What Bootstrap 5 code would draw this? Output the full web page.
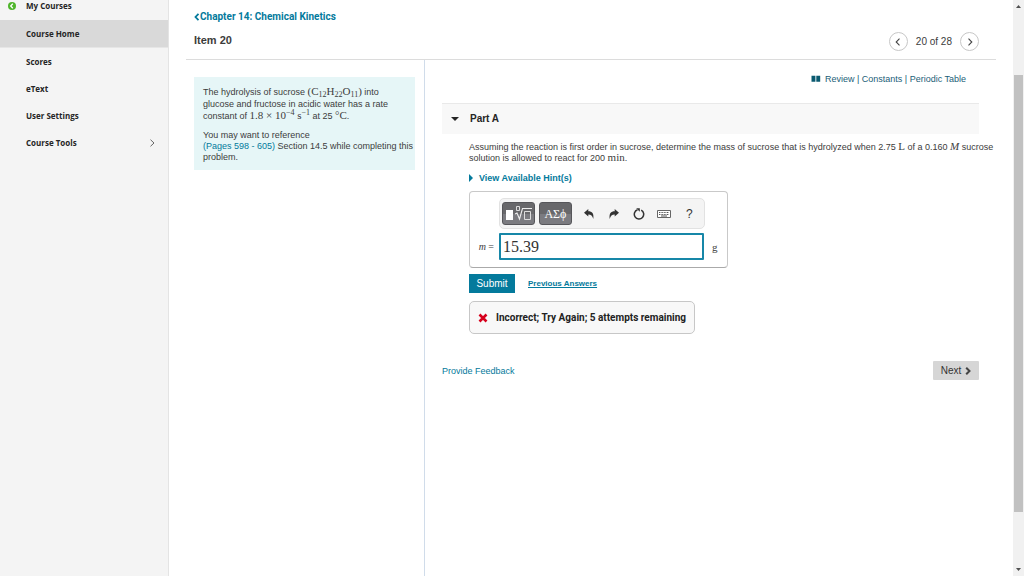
<!DOCTYPE html>
<html lang="en">
<head>
<meta charset="utf-8">
<meta name="viewport" content="width=device-width, initial-scale=1">
<title>Item 20 - Chapter 14: Chemical Kinetics</title>
<link href="https://cdn.jsdelivr.net/npm/bootstrap@5.3.0/dist/css/bootstrap.min.css" rel="stylesheet">
<style>
  :root { --teal: #047a9c; --ink: #3c3c3c; }
  body { font-family: "Liberation Sans", Arial, sans-serif; font-size: 9px; line-height: 11px; color: var(--ink); background: #fff; }
  a { color: var(--teal); text-decoration: none; }
  svg { display: block; flex: none; }

  .side-menu { width: 169px; flex: none; background: #f4f4f4; border-right: 1px solid #e4e4e4; font-family: "Open Sans", "Noto Sans", sans-serif; font-weight: 700; }
  .side-menu .nav-link { height: 27px; padding: 0 12px 0 8px; color: #252525; font-size: 8px; line-height: 12px; }
  .side-menu .first-link { height: 20px; padding-bottom: 8px; }
  .side-menu .current { background: #d9d9d9; border-bottom: 1px solid #e6e6e6; height: 28px; }
  .link-mark { width: 18px; flex: none; }

  .main-area { min-width: 0; }
  .item-head { margin: 0 17px; padding: 10px 17px 8px 8px; border-bottom: 1px solid #dcdcdc; }
  .chapter-link { font-family: Roboto, sans-serif; font-size: 10px; line-height: 13px; font-weight: 700; }
  .item-title { font-size: 11px; line-height: 16px; font-weight: 700; margin: 9px 0 3px; }
  .pager-text { font-size: 10px; line-height: 12px; }
  .round-btn { width: 19px; height: 19px; border: 1px solid #c7c7c7; background: #fff; color: #444; }

  .intro-col { width: 256px; flex: none; padding: 17px 9px 0 25px; border-right: 1px solid #d0dcea; }
  .intro-box { background: #e6f6f7; padding: 9px 0 7px 9px; }
  .intro-box p { line-height: 12px; }
  .intro-box .reference-note { line-height: 11px; }
  .math { font-family: "Liberation Serif", "Times New Roman", serif; font-size: 11px; line-height: 0; }
  .math sub, .math sup { font-size: 8px; }

  .work-col { padding: 13px 34px 0 17px; min-width: 0; }
  .tool-links { padding-right: 13px; line-height: 12px; }
  .tool-links a, .tool-links span { color: #1b6077; }
  .part-bar { margin-top: 18px; height: 31px; padding-left: 9px; background: #f8f8f8; border-top: 1px solid #e9e9e9; }
  .part-bar h2 { font-size: 10px; line-height: 12px; font-weight: 700; color: #252525; margin: 0; }
  .part-body { padding: 8px 0 0 27px; }
  .problem-text { margin-right: -24px; }
  .hint-link { font-size: 9px; line-height: 12px; font-weight: 700; }

  .answer-box { width: 259px; height: 77px; margin-top: 7px; padding: 6px 7px 7px; border: 1px solid #c9c9c9; border-bottom-color: #aaa; border-radius: 4px; }
  .eq-tools { width: 206px; height: 31px; margin-left: 22px; padding: 0 2px; background: #f4f4f4; border: 1px solid #e2e2e2; border-radius: 5px; }
  .dark-btn { width: 34px; height: 23px; border: 1px solid #56565a; border-radius: 3px; color: #fff; background: linear-gradient(#68686b 50%, #7b7b80 50%); font: 12px/12px "Liberation Serif", serif; }
  .flat-btn { width: 26px; height: 23px; color: #333; background: none; font-size: 12px; line-height: 12px; }
  .var-label { width: 22px; padding-right: 5px; font: 10px/12px "Liberation Serif", serif; }
  .answer-input { width: 205px; height: 27px; padding: 0 2px; border: 2px solid #1787a8; border-radius: 1px; font: 16px/20px "Liberation Serif", serif; color: #333; }
  .answer-input:focus { box-shadow: none; border-color: #1787a8; }
  .submit-row { margin-top: 6px; gap: 13px; }
  .submit-btn { width: 46px; height: 19px; background: var(--teal); color: #fff; font-size: 10px; line-height: 12px; }
  .prev-link { font-size: 8px; line-height: 12px; font-weight: 700; text-decoration: underline; }
  .result-box { width: 226px; height: 33px; margin-top: 8px; padding-left: 8px; background: #f8f8f8; border: 1px solid #c7c7c7; border-radius: 5px; color: #222; font-family: Roboto, sans-serif; font-size: 10px; line-height: 12px; font-weight: 700; }
  .page-foot { margin-top: 27px; font-size: 9px; line-height: 12px; }
  .next-btn { width: 46px; height: 19px; background: #d6d6d6; color: #333; border-radius: 1px; }

  .scroll-rail { width: 11px; flex: none; height: 100vh; background: #f1f1f1; padding: 5px 1px 4px; }
  .scroll-thumb { height: 77%; margin-top: 66px; background: #c1c1c1; }
</style>
</head>
<body>
<div class="d-flex min-vh-100">
  <nav class="side-menu" aria-label="Course">
    <div class="nav flex-column">
      <a class="nav-link first-link d-flex align-items-center" href="#"><span class="link-mark">
        <svg width="8" height="8" viewBox="0 0 8 8"><circle cx="4" cy="4" r="4" fill="#4fb52b"/><path d="M4.8 1.8 2.7 4l2.1 2.2" fill="none" stroke="#fff" stroke-width="1.3"/></svg></span>My Courses</a>
      <a class="nav-link current d-flex align-items-center" href="#" aria-current="page"><span class="link-mark"></span>Course Home</a>
      <a class="nav-link d-flex align-items-center" href="#"><span class="link-mark"></span>Scores</a>
      <a class="nav-link d-flex align-items-center" href="#"><span class="link-mark"></span>eText</a>
      <a class="nav-link d-flex align-items-center" href="#"><span class="link-mark"></span>User Settings</a>
      <a class="nav-link d-flex align-items-center" href="#"><span class="link-mark"></span>Course Tools
        <svg class="ms-auto" width="8" height="8" viewBox="0 0 8 8"><path d="M2.5.7 6 4 2.5 7.3" fill="none" stroke="#666"/></svg></a>
    </div>
  </nav>

  <main class="main-area flex-grow-1 d-flex flex-column">
    <header class="item-head d-flex justify-content-between align-items-end">
      <div>
        <a class="chapter-link d-flex align-items-center" href="#"><svg width="6" height="8" viewBox="0 0 6 8"><path d="M4.5.8 1.5 4l3 3.2" fill="none" stroke="#047a9c" stroke-width="1.8"/></svg>Chapter 14: Chemical Kinetics</a>
        <h1 class="item-title">Item 20</h1>
      </div>
      <div class="d-flex align-items-center gap-2">
        <button class="btn round-btn rounded-circle p-0 d-flex align-items-center justify-content-center" type="button" aria-label="Previous item"><svg width="8" height="8" viewBox="0 0 8 8"><path d="M5.5.7 2.2 4l3.3 3.3" fill="none" stroke="currentColor" stroke-width="1.1"/></svg></button>
        <span class="pager-text">20 of 28</span>
        <button class="btn round-btn rounded-circle p-0 d-flex align-items-center justify-content-center" type="button" aria-label="Next item"><svg width="8" height="8" viewBox="0 0 8 8"><path d="M2.5.7 5.8 4 2.5 7.3" fill="none" stroke="currentColor" stroke-width="1.1"/></svg></button>
      </div>
    </header>

    <div class="d-flex flex-grow-1">
      <section class="intro-col">
        <div class="intro-box text-nowrap">
          <p class="mb-2">The hydrolysis of sucrose <span class="math">(C<sub>12</sub>H<sub>22</sub>O<sub>11</sub>)</span> into<br>glucose and fructose in acidic water has a rate<br>constant of <span class="math">1.8 × 10<sup>−4</sup> s<sup>−1</sup></span> at 25 <span class="math">°C</span>.</p>
          <p class="reference-note mb-0">You may want to reference<br><a href="#">(Pages 598 - 605)</a> Section 14.5 while completing this<br>problem.</p>
        </div>
      </section>

      <section class="work-col flex-grow-1">
        <div class="tool-links d-flex justify-content-end align-items-center">
          <svg class="me-1" width="10" height="8" viewBox="0 0 10 8"><path d="M.5.8h3.9v6H.5zM5.3.8h3.9v6H5.3z" fill="#0a5a70"/></svg>
          <a href="#">Review</a><span>&nbsp;|&nbsp;</span><a href="#">Constants</a><span>&nbsp;|&nbsp;</span><a href="#">Periodic Table</a>
        </div>
        <div class="part-bar d-flex align-items-center gap-2">
          <svg width="11" height="6" viewBox="0 0 11 6"><path d="M0 1h8L4 5z" fill="#252525"/></svg>
          <h2>Part A</h2>
        </div>
        <div class="part-body">
          <p class="problem-text mb-2">Assuming the reaction is first order in sucrose, determine the mass of sucrose that is hydrolyzed when 2.75 <span class="math">L</span> of a 0.160 <i class="math">M</i> sucrose<br>solution is allowed to react for 200 <span class="math">min</span>.</p>
          <a class="hint-link d-flex align-items-center" href="#"><svg class="me-1" width="6" height="8" viewBox="0 0 6 8"><path d="M0 0v8l4-4z" fill="#047a9c"/></svg>View Available Hint(s)</a>

          <form>
            <div class="answer-box">
              <div class="eq-tools d-flex align-items-center">
                <button class="btn dark-btn p-0 d-flex align-items-center justify-content-center" type="button" aria-label="Templates"><svg width="28" height="17" viewBox="0 0 28 17"><path d="M2 5h7v10H2z" fill="#fff"/><path d="M12.5 1.500h3v4h-3zM20.5 6.500h6v8h-6z" fill="none" stroke="#ddd"/><path d="m11 9 2-1 2.500 6L18.500 3.500H28" fill="none" stroke="#eee" stroke-width="1.100"/></svg></button>
                <button class="btn dark-btn p-0 ms-1" type="button">ΑΣϕ</button>
                <button class="btn flat-btn p-0 d-flex align-items-center justify-content-center ms-1" type="button" aria-label="Undo"><svg width="12" height="12" viewBox="0 0 12 12"><path d="M1 4.700 5.300 1v2.300c3.800 0 5.800 2.200 5 7.700C9.500 8 8 6.700 5.300 6.600v2z" fill="#333"/></svg></button>
                <button class="btn flat-btn p-0 d-flex align-items-center justify-content-center" type="button" aria-label="Redo"><svg width="12" height="12" viewBox="0 0 12 12"><path d="M11 4.700 6.700 1v2.300c-3.800 0-5.800 2.200-5 7.700C2.500 8 4 6.700 6.700 6.600v2z" fill="#333"/></svg></button>
                <button class="btn flat-btn p-0 d-flex align-items-center justify-content-center" type="button" aria-label="Reset"><svg width="12" height="12" viewBox="0 0 12 12"><path d="M8.200 2.100A4.700 4.700 0 1 1 4.500 1.800" fill="none" stroke="#333" stroke-width="1.500"/><path d="M3.200.2h3.600v3.600z" fill="#333"/></svg></button>
                <button class="btn flat-btn p-0 d-flex align-items-center justify-content-center" type="button" aria-label="Keyboard"><svg width="14" height="8" viewBox="0 0 14 8"><path d="M.5.5h13v7H.5z" fill="#fff" stroke="#666"/><path d="M2 2.500h10M2 4.500h10" stroke="#555" stroke-dasharray="1 .6"/><path d="M4 6h6" stroke="#555"/></svg></button>
                <button class="btn flat-btn p-0" type="button">?</button>
              </div>
              <div class="d-flex align-items-center mt-1">
                <label class="var-label text-end" for="answer"><i>m</i> =</label>
                <input class="form-control answer-input" id="answer" type="text" value="15.39">
                <span class="math ms-2">g</span>
              </div>
            </div>
            <div class="d-flex align-items-center submit-row">
              <button class="btn submit-btn p-0 border-0 rounded-0" type="button">Submit</button>
              <a class="prev-link" href="#">Previous Answers</a>
            </div>
          </form>
          <div class="result-box d-flex align-items-center" role="status">
            <svg width="10" height="10" viewBox="0 0 10 10"><path d="m1.500 1.500 7 7m0-7-7 7" stroke="#d6001c" stroke-width="2.600"/></svg>
            <span class="ms-2">Incorrect; Try Again; 5 attempts remaining</span>
          </div>
        </div>
        <div class="page-foot d-flex justify-content-between align-items-center">
          <a href="#">Provide Feedback</a>
          <button class="btn next-btn p-0 border-0 d-flex align-items-center justify-content-center pager-text" type="button">Next <svg class="ms-1" width="6" height="8" viewBox="0 0 6 8"><path d="M1.200.7 4.500 4 1.200 7.300" fill="none" stroke="#444" stroke-width="2"/></svg></button>
        </div>
      </section>
    </div>
  </main>

  <div class="scroll-rail sticky-top d-flex flex-column align-items-center" aria-hidden="true">
    <svg width="5" height="4" viewBox="0 0 5 4"><path d="M0 3h5L2.500 0z" fill="#505050"/></svg>
    <div class="scroll-thumb w-100"></div>
    <svg class="mt-auto" width="5" height="4" viewBox="0 0 5 4"><path d="M0 0h5L2.500 3z" fill="#505050"/></svg>
  </div>
</div>
<script src="https://cdn.jsdelivr.net/npm/bootstrap@5.3.0/dist/js/bootstrap.bundle.min.js"></script>
</body>
</html>
